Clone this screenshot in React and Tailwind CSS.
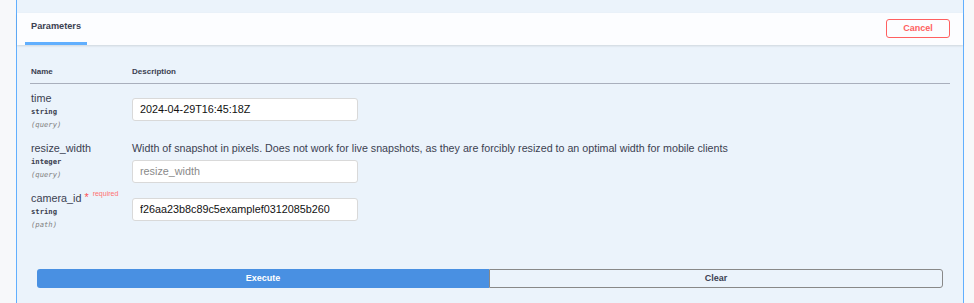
import React from "react";

const params = [
  { name: "time", type: "string", loc: "query", value: "2024-04-29T16:45:18Z" },
  {
    name: "resize_width",
    type: "integer",
    loc: "query",
    placeholder: "resize_width",
    desc: "Width of snapshot in pixels. Does not work for live snapshots, as they are forcibly resized to an optimal width for mobile clients",
  },
  { name: "camera_id", type: "string", loc: "path", required: true, value: "f26aa23b8c89c5examplef0312085b260" },
];

const ParamRow = ({ p }) => (
  <div className="flex h-[50px]">
    <div className="w-[101px] pt-[1px]">
      <div className="flex items-start text-[10.8px] leading-[14px] text-[#3b4151]">
        <span>{p.name}</span>
        {p.required && (
          <>
            <span className="ml-[3px] -mt-[1px] text-[#ff4f4f]">*</span>
            <span className="ml-[4px] -mt-[2px] text-[7px] leading-[10px] text-[#ff7070]">required</span>
          </>
        )}
      </div>
      <div className="font-['DejaVu_Sans_Mono',monospace] text-[7.2px] font-bold leading-[13px] text-[#3b4151]">
        {p.type}
      </div>
      <div className="font-['DejaVu_Sans_Mono',monospace] text-[7.2px] italic leading-[14px] text-[#808080]">
        ({p.loc})
      </div>
    </div>
    <div className={p.desc ? "" : "pt-[6px]"}>
      {p.desc && (
        <div className="text-[10.7px] leading-[16px] text-[#3b4151] mb-[2px]">{p.desc}</div>
      )}
      <input
        readOnly
        value={p.value || ""}
        placeholder={p.placeholder}
        className="w-[226px] h-[23px] px-[7px] bg-white border border-[#d9d9d9] rounded-[3px] text-[10.8px] text-[#111] placeholder:text-[#8a8a8a] outline-none"
      />
    </div>
  </div>
);

export default function App() {
  return (
    <div className="w-[974px] h-[303px] bg-[#f7f8fa] flex pl-[16px] pr-[10px] overflow-hidden font-['Liberation_Sans',Arial,sans-serif]">
      <div className="flex-1 border-x border-[#61affe] bg-[#ebf3fb] pt-[13px]">
        {/* tab header */}
        <div className="h-[32px] bg-[#fcfdff] shadow-[0_1px_2px_rgba(0,0,0,0.12)] flex items-end justify-between pl-[8px] pr-[13px]">
          <div className="px-[6px] pb-[10px] border-b-[3px] border-[#61affe] text-[9.2px] font-bold text-[#3b4151] leading-[12px]">
            Parameters
          </div>
          <button className="self-center mb-[1px] w-[64px] h-[19px] border border-[#ff6060] rounded-[3px] bg-transparent text-[9px] font-bold text-[#ff6060]">
            Cancel
          </button>
        </div>

        {/* table */}
        <div className="px-[13px] pt-[15px]">
          <div className="flex h-[24px] items-center border-b border-[#a9afbc] px-[1px] text-[8px] font-bold text-[#3b4151]">
            <div className="w-[101px]">Name</div>
            <div>Description</div>
          </div>
          <div className="pt-[6px] pl-[1px]">
            {params.map((p) => (
              <ParamRow key={p.name} p={p} />
            ))}
          </div>
        </div>

        {/* actions */}
        <div className="flex px-[20px] mt-[29px]">
          <button className="flex-1 h-[19px] bg-[#4990e2] rounded-l-[3px] text-[9px] font-bold text-white">
            Execute
          </button>
          <button className="flex-1 h-[19px] border border-[#888] rounded-r-[3px] bg-transparent text-[9px] font-bold text-[#3b4151]">
            Clear
          </button>
        </div>
      </div>
    </div>
  );
}
